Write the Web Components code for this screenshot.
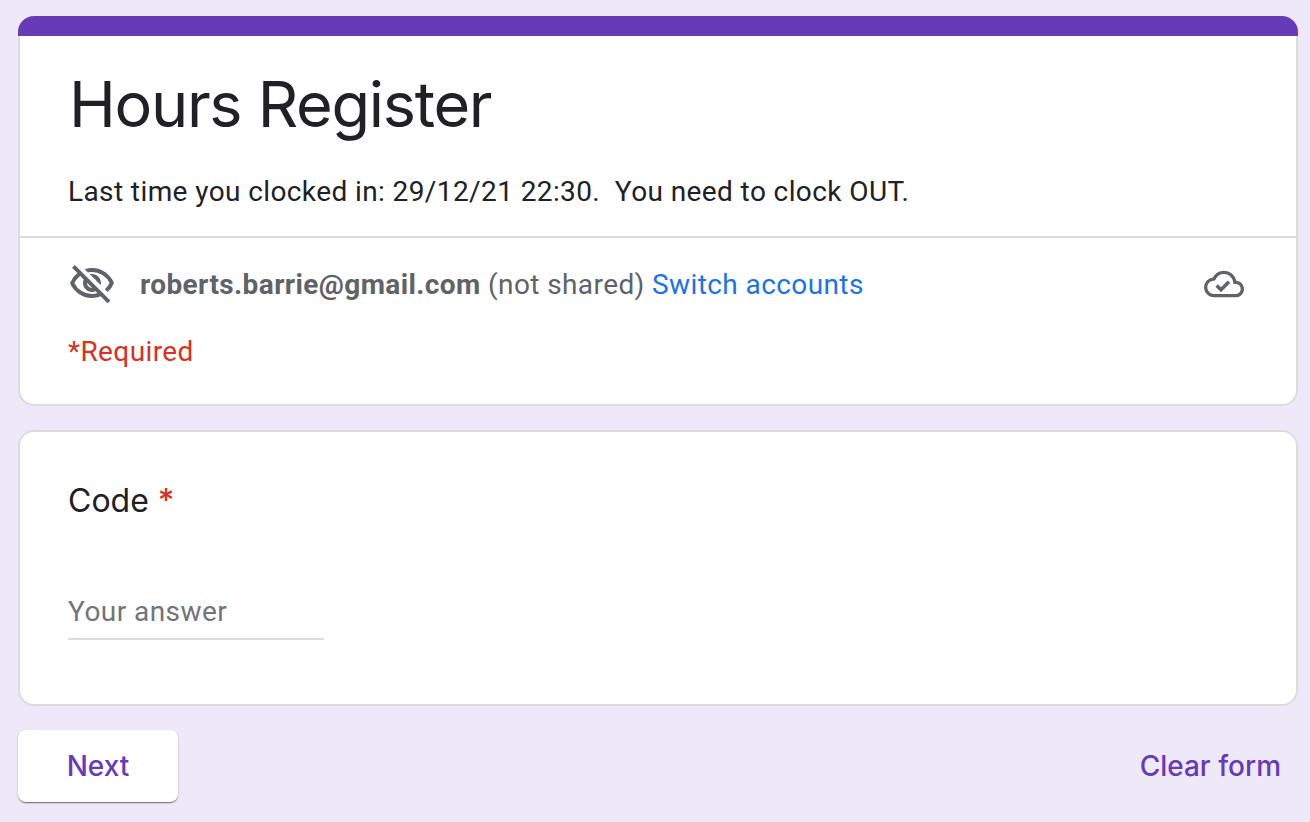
<!DOCTYPE html>
<html><head><meta charset="utf-8"><title>Hours Register</title>
<style>
html,body{margin:0;padding:0;height:822px;overflow:hidden;background:#eee9f8;}
</style></head><body>
<form-page>
  <header-card title-text="Hours Register" description="Last time you clocked in: 29/12/21 22:30.  You need to clock OUT."></header-card>
  <question-card label="Code" placeholder="Your answer"></question-card>
  <form-actions></form-actions>
</form-page>
<script>
const H=(tag,html)=>customElements.define(tag,class extends HTMLElement{connectedCallback(){if(!this.shadowRoot){this.attachShadow({mode:'open'}).innerHTML=html(this);}}});
customElements.define('form-page',class extends HTMLElement{constructor(){super();this.attachShadow({mode:'open'}).innerHTML='<style>:host{display:flex;flex-direction:column;width:1280px;padding:16px 0 0 18px}</style><slot></slot>';}});
H('header-card',el=>`<style>
:host{display:block;box-sizing:border-box;height:390px;background:#fff;border-radius:16px;border:solid #dadce0;border-width:0 2px 2px 2px;font-family:Roboto,sans-serif;letter-spacing:.4px}
.bar{height:20px;background:#673ab7;margin:0 -2px;border-radius:16px 16px 0 0}
h1{margin:0;padding:24px 0 0 49px;font:400 63px/88px Inter,sans-serif;color:#202124;letter-spacing:-1.3px;}
.desc{padding:26px 0 26px 48px;font-size:28px;line-height:36px;color:#202124;white-space:pre;}
.acct{border-top:2px solid #dadce0;}
.row{display:flex;align-items:center;height:92px;padding:0 52px 0 48px;box-sizing:border-box;font-size:28px;color:#5f6368;}
.row svg{display:block;flex:none}
.eye{margin-right:24px}
b{font-weight:700}
a{color:#1a73e8;text-decoration:none}
.txt{flex:1;white-space:pre}
.req{padding-left:48px;font-size:28px;color:#d93025;line-height:36px;margin-top:4px}
</style><div class="bar"></div><h1>${el.getAttribute('title-text')}</h1><div class="desc">${el.getAttribute('description')}</div>
<div class="acct"><div class="row"><svg class="eye" width="48" height="48" viewBox="0 0 24 24" fill="#5f6368"><path d="M12 6a9.77 9.77 0 0 1 8.82 5.5 9.65 9.65 0 0 1-2.41 3.12l1.41 1.41A11.8 11.8 0 0 0 23 11.5C21.27 7.11 17 4 12 4c-1.27 0-2.49.2-3.64.57l1.65 1.65C10.66 6.09 11.32 6 12 6zm-1.07 1.14L13 9.21c.57.25 1.03.71 1.28 1.28l2.07 2.07c.08-.34.14-.7.14-1.07C16.5 9.01 14.48 7 12 7c-.37 0-.72.05-1.07.14zM2.01 3.87l2.68 2.68A11.74 11.74 0 0 0 1 11.5C2.73 15.89 7 19 12 19c1.52 0 2.98-.29 4.32-.82l3.42 3.42 1.41-1.41L3.42 2.45 2.01 3.87zm7.5 7.5 2.61 2.61c-.04.01-.08.02-.12.02a2.5 2.5 0 0 1-2.5-2.5c0-.05.01-.08.01-.13zm-3.4-3.4 1.75 1.75a4.6 4.6 0 0 0-.36 1.78 4.507 4.507 0 0 0 6.27 4.14l.98.98c-.88.24-1.8.38-2.75.38a9.77 9.77 0 0 1-8.82-5.5c.7-1.43 1.72-2.61 2.93-3.53z"/></svg><span class="txt"><b>roberts.barrie@gmail.com</b> (not shared) <a>Switch accounts</a></span><svg width="40" height="40" viewBox="0 0 24 24"><path fill="#5f6368" fill-rule="evenodd" d="M19.35 10.04A7.49 7.49 0 0 0 12 4C9.11 4 6.6 5.64 5.35 8.04A5.994 5.994 0 0 0 0 14c0 3.31 2.69 6 6 6h13c2.76 0 5-2.24 5-5 0-2.64-2.05-4.78-4.65-4.96zM19 18H6c-2.21 0-4-1.79-4-4 0-2.05 1.53-3.76 3.56-3.97l1.07-.11.5-.95A5.469 5.469 0 0 1 12 6c2.62 0 4.88 1.86 5.39 4.43l.3 1.5 1.53.11A2.98 2.98 0 0 1 22 15c0 1.65-1.35 3-3 3z"/><path fill="none" stroke="#5f6368" stroke-width="2.1" d="M7.6 12.9l2.6 2.6 4.8-4.8"/></svg></div>
<div class="req">*Required</div></div>`);
H('question-card',el=>`<style>
:host{display:block;box-sizing:border-box;height:276px;margin-top:24px;background:#fff;border-radius:16px;border:2px solid #dadce0;padding:47px 48px 0;}
.q{font:400 32px/44px Inter,sans-serif;color:#202124;}
.q i{font-style:normal;color:#d93025;font-weight:500}
.in{margin-top:71px;width:256px;border-bottom:2px solid #dadce0;height:44px;font:400 28px/36px Roboto,sans-serif;color:#70757a;letter-spacing:.45px}
</style><div class="q">${el.getAttribute('label')} <i>*</i></div><div class="in">${el.getAttribute('placeholder')}</div>`);
H('form-actions',()=>`<style>
:host{display:flex;justify-content:space-between;align-items:center;margin-top:24px;font:500 28px/36px Inter,sans-serif;color:#673ab7;}
.next{width:160px;height:72px;background:#fff;border-radius:8px;display:flex;align-items:center;justify-content:center;box-shadow:0 2px 1px -1px rgba(0,0,0,.3),0 1px 1px 0 rgba(0,0,0,.2),0 1px 3px 0 rgba(0,0,0,.16);}
.clear{padding-right:17px}
</style><div class="next">Next</div><div class="clear">Clear form</div>`);
</script>
</body></html>
